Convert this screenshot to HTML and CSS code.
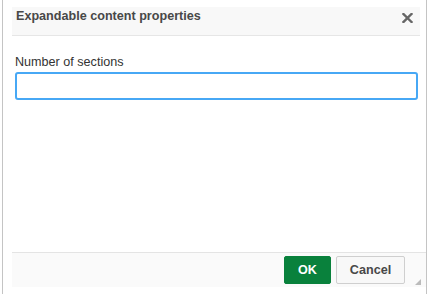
FILE: index.html
```html
<!DOCTYPE html>
<html lang="en">
<head>
    <meta charset="UTF-8">
    <meta name="viewport" content="width=device-width, initial-scale=1.0">
    <title>Expandable content properties</title>
    <link rel="stylesheet" href="styles.css">
</head>
<body>
    <main class="dialog">
        <header class="dialog-title">
            <h3 class="title-text">Expandable content properties</h3>
            <svg class="close-btn" width="11" height="10" viewBox="0 0 11 10">
                <path d="M1.5 1 L9.5 9 M9.5 1 L1.5 9" stroke="#666" stroke-width="2.4" stroke-linecap="square"/>
            </svg>
        </header>
        <div class="dialog-body">
            <label class="field-label" for="sections">Number of sections</label>
            <input class="field-input" id="sections" type="text">
        </div>
        <footer class="dialog-footer">
            <button class="btn btn-ok">OK</button>
            <button class="btn btn-cancel">Cancel</button>
            <span class="resize-grip"></span>
        </footer>
    </main>
</body>
</html>
```

FILE: styles.css
```css
* {
    margin: 0;
    box-sizing: border-box;
    font-family: 'Liberation Sans', Arial, sans-serif;
}

body {
    background-color: #fff;
    height: 294px;
    overflow: hidden;
}

.dialog {
    height: 294px;
    margin-left: 2px;
    width: 425px;
    border-left: 1px solid #c4c4c4;
    border-right: 1px solid #c4c4c4;
    padding: 7px 0 0 9px;
    display: flex;
    flex-direction: column;
}

.dialog-title {
    height: 29px;
    margin-right: 6px;
    background-color: #f8f8f8;
    border-bottom: 1px solid #e6e6e6;
    display: flex;
    align-items: flex-start;
    justify-content: space-between;
    padding: 2px 7px 0 4px;
}

.title-text {
    font-size: 12.6px;
    line-height: 15px;
    font-weight: bold;
    color: #484848;
}

.close-btn {
    margin-top: 4px;
}

.dialog-body {
    flex: 1;
    display: flex;
    flex-direction: column;
    padding: 18px 8px 0 3px;
}

.field-label {
    font-size: 12.6px;
    color: #333;
    line-height: 16px;
    margin-bottom: 2px;
}

.field-input {
    height: 28px;
    border: 2px solid #47a8f5;
    border-radius: 3px;
    outline: none;
}

.dialog-footer {
    height: 35px;
    margin-bottom: 7px;
    background-color: #fafafa;
    border-top: 1px solid #e4e4e4;
    display: flex;
    align-items: center;
    justify-content: flex-end;
    padding: 0 21px 0 0;
    gap: 5px;
    position: relative;
}

.btn {
    height: 28px;
    border-radius: 2px;
    font-size: 12.6px;
    font-weight: bold;
}

.btn-ok {
    width: 47px;
    background-color: #09813c;
    border: 1px solid #09813c;
    color: #fff;
}

.btn-cancel {
    width: 69px;
    background-color: #f8f8f8;
    border: 1px solid #cfcfcf;
    color: #484848;
}

.resize-grip {
    position: absolute;
    right: 5px;
    bottom: 2px;
    width: 0;
    height: 0;
    border-left: 6px solid transparent;
    border-bottom: 6px solid #bbb;
}
```
